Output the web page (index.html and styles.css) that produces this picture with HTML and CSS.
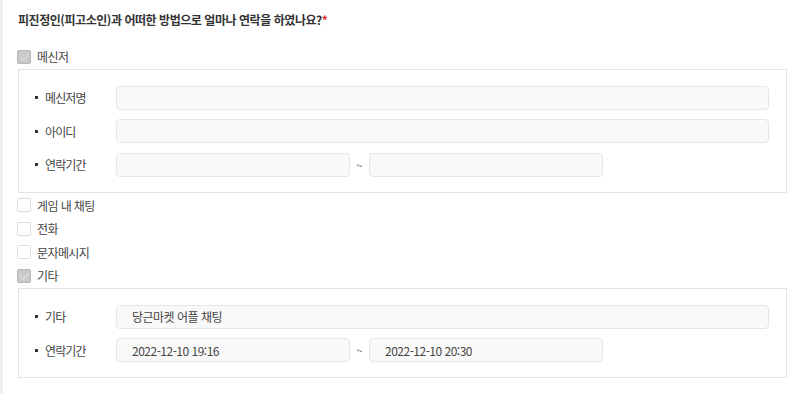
FILE: index.html
```html
<!DOCTYPE html>
<html lang="ko">
<head>
<meta charset="utf-8">
<link rel="stylesheet" href="styles.css">
</head>
<body>
<div class="page">
  <h2 class="q-title">피진정인(피고소인)과 어떠한 방법으로 얼마나 연락을 하였나요?<span class="req">*</span></h2>

  <label class="check-row"><span class="cb checked"></span><span class="cb-label">메신저</span></label>
  <div class="sub-box">
    <div class="field-row">
      <span class="field-label">메신저명</span>
      <div class="input full"></div>
    </div>
    <div class="field-row">
      <span class="field-label">아이디</span>
      <div class="input full"></div>
    </div>
    <div class="field-row">
      <span class="field-label">연락기간</span>
      <div class="input half"></div>
      <span class="tilde">~</span>
      <div class="input half"></div>
    </div>
  </div>

  <div class="check-list">
    <label class="check-row"><span class="cb"></span><span class="cb-label">게임 내 채팅</span></label>
    <label class="check-row"><span class="cb"></span><span class="cb-label">전화</span></label>
    <label class="check-row"><span class="cb"></span><span class="cb-label">문자메시지</span></label>
    <label class="check-row"><span class="cb checked"></span><span class="cb-label">기타</span></label>
  </div>
  <div class="sub-box">
    <div class="field-row">
      <span class="field-label">기타</span>
      <div class="input full">당근마켓 어플 채팅</div>
    </div>
    <div class="field-row">
      <span class="field-label">연락기간</span>
      <div class="input half">2022-12-10 19:16</div>
      <span class="tilde">~</span>
      <div class="input half">2022-12-10 20:30</div>
    </div>
  </div>
</div>
</body>
</html>
```

FILE: styles.css
```css
html, body {
  margin: 0;
  padding: 0;
  background: #fff;
}
body {
  font-family: "Noto Sans CJK KR", "Noto Sans", sans-serif;
  color: #333;
  font-size: 12px;
}
.page {
  border-left: 3px solid #eeeeee;
  padding: 10px 13px 0 14px;
  min-height: 394px;
  box-sizing: border-box;
}
.q-title {
  margin: 0 0 15px 1px;
  font-size: 12px;
  line-height: 20px;
  font-weight: 700;
  letter-spacing: -0.45px;
  color: #333;
}
.req {
  color: #e03030;
}
.check-list {
  margin-top: 1px;
}
.check-row {
  display: flex;
  align-items: center;
  height: 23.5px;
  gap: 6px;
}
.cb {
  width: 14px;
  height: 14px;
  box-sizing: border-box;
  border: 1px solid #dcdcdc;
  border-radius: 2px;
  background: #fff;
  position: relative;
  flex: none;
}
.cb.checked {
  background: #c9c9c9;
  border-color: #b6b6b6;
}
.cb.checked::after {
  content: "";
  position: absolute;
  left: 3.5px;
  top: 1px;
  width: 3.5px;
  height: 7px;
  border-right: 1.5px solid #e2e2e2;
  border-bottom: 1.5px solid #e2e2e2;
  transform: rotate(40deg);
}
.cb-label {
  font-size: 12px;
  letter-spacing: -0.6px;
  color: #444;
}
.sub-box {
  margin: 0 0 0 1px;
  border: 1px solid #e3e3e3;
  padding: 16px 16px 15px 16px;
  display: flex;
  flex-direction: column;
  gap: 9.5px;
}
.field-row {
  display: flex;
  align-items: center;
  height: 24px;
}
.field-label {
  width: 81px;
  flex: none;
  display: flex;
  align-items: center;
  gap: 7px;
  font-size: 12px;
  letter-spacing: -0.9px;
  color: #444;
}
.field-label::before {
  content: "";
  width: 3px;
  height: 3px;
  background: #333;
}
.input {
  height: 24px;
  box-sizing: border-box;
  border: 1px solid #e6e6e6;
  border-radius: 4px;
  background: #f9f9f9;
  padding-left: 15px;
  display: flex;
  align-items: center;
  font-size: 12px;
  letter-spacing: -0.5px;
  color: #444;
}
.input.full {
  width: 653px;
}
.input.half {
  width: 234px;
}
.tilde {
  width: 19px;
  text-align: center;
  font-size: 11px;
  color: #555;
}
```
